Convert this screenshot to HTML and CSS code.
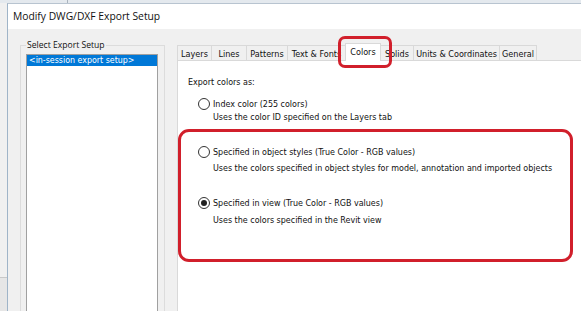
FILE: index.html
```html
<!DOCTYPE html>
<html>
<head>
<meta charset="utf-8">
<link rel="stylesheet" href="styles.css">
</head>
<body>
<div class="desk-top"><span class="desk-mark"></span></div>
<div class="screen">
  <div class="desk-left"><div class="desk-left-low"></div></div>
  <div class="dialog">
    <div class="titlebar">Modify DWG/DXF Export Setup</div>
    <div class="dlg-body">
      <fieldset class="group">
        <legend class="group-label">Select Export Setup</legend>
        <div class="listbox">
          <div class="list-item sel">&lt;in-session export setup&gt;</div>
        </div>
      </fieldset>
      <div class="tabctl">
        <div class="tabs">
          <div class="tab t-layers">Layers</div>
          <div class="tab t-lines">Lines</div>
          <div class="tab t-patterns">Patterns</div>
          <div class="tab t-text">Text &amp; Fonts</div>
          <div class="tab t-colors active">Colors</div>
          <div class="tab t-solids">Solids</div>
          <div class="tab t-units">Units &amp; Coordinates</div>
          <div class="tab t-general">General</div>
        </div>
        <div class="panel">
          <div class="heading">Export colors as:</div>
          <div class="opt opt1">
            <div class="radio-row"><span class="radio"></span><span class="label">Index color (255 colors)</span></div>
            <div class="desc">Uses the color ID specified on the Layers tab</div>
          </div>
          <div class="opt opt2">
            <div class="radio-row"><span class="radio"></span><span class="label">Specified in object styles (True Color - RGB values)</span></div>
            <div class="desc">Uses the colors specified in object styles for model, annotation and imported objects</div>
          </div>
          <div class="opt opt3">
            <div class="radio-row"><span class="radio checked"></span><span class="label">Specified in view (True Color - RGB values)</span></div>
            <div class="desc">Uses the colors specified in the Revit view</div>
          </div>
        </div>
      </div>
    </div>
  </div>
</div>
<div class="mark mark-tab"></div>
<div class="mark mark-opts"></div>
</body>
</html>
```

FILE: styles.css
```css
html, body {
  margin: 0;
  padding: 0;
  width: 581px;
  height: 311px;
  overflow: hidden;
  background: #f0f0f0;
  font-family: "DejaVu Sans Condensed", "DejaVu Sans", sans-serif;
  color: #000;
}

.desk-top {
  height: 3px;
  background: #e4e9ee;
  position: relative;
}
.desk-mark {
  position: absolute;
  left: 67px;
  top: 0;
  width: 1px;
  height: 3px;
  background: #a9b3bd;
}

.screen {
  display: flex;
  height: 308px;
  overflow: hidden;
}

.desk-left {
  width: 7px;
  background: #f0f0f0;
  display: flex;
  flex-direction: column;
  justify-content: flex-end;
}
.desk-left-low {
  height: 33px;
  border-top: 1px solid #c8c8c8;
  background: #e6e6e6;
}

.dialog {
  flex: 1;
  border-left: 1px solid #9fb4c8;
  border-top: 1px solid #b8c4d0;
  display: flex;
  flex-direction: column;
  min-width: 0;
  overflow: hidden;
}

.titlebar {
  height: 25px;
  flex: none;
  background: #fff;
  font-family: "Open Sans", "Noto Sans", sans-serif;
  font-size: 10.3px;
  line-height: 25px;
  padding-left: 5px;
  color: #111;
  white-space: nowrap;
}

.dlg-body {
  flex: 1;
  display: flex;
  align-items: flex-start;
  padding-left: 12px;
  min-height: 0;
}

.group {
  margin: 10px 0 0 0;
  padding: 0 6px 0 5px;
  width: 145px;
  box-sizing: border-box;
  border: 1px solid #dcdcdc;
  height: 300px;
}
.group-label {
  font-family: "Open Sans", "Noto Sans", sans-serif;
  font-size: 8.6px;
  padding: 0 1px;
  margin-left: 0;
  line-height: 12px;
  color: #111;
}
.listbox {
  margin-top: 3px;
  background: #fff;
  border: 1px solid #a0a0a0;
  height: 260px;
}
.list-item {
  font-size: 8.8px;
  line-height: 11px;
  padding-left: 2px;
  white-space: nowrap;
}
.list-item.sel {
  background: #0078d7;
  color: #fff;
}

.tabctl {
  margin-left: 12px;
  margin-top: 15px;
  flex: 1;
  display: flex;
  flex-direction: column;
  min-width: 0;
}
.tabs {
  display: flex;
  height: 16px;
  align-items: flex-end;
}
.tab {
  height: 15px;
  box-sizing: border-box;
  border: 1px solid #d9d9d9;
  border-bottom: none;
  border-left: none;
  background: #f0f0f0;
  font-size: 9px;
  line-height: 16px;
  text-align: center;
  white-space: nowrap;
  color: #111;
}
.t-layers { width: 35px; border-left: 1px solid #d9d9d9; }
.t-lines { width: 35px; }
.t-patterns { width: 41px; }
.t-text { width: 58px; }
.t-colors { width: 36px; }
.t-solids { width: 33px; }
.t-units { width: 86px; }
.t-general { width: 37px; }
.tab.active {
  height: 18px;
  background: #fff;
  margin-bottom: -1px;
  line-height: 17px;
  position: relative;
  border-left: 1px solid #d9d9d9;
  margin-left: -1px;
}

.panel {
  background: #fff;
  border-top: 1px solid #d9d9d9;
  border-left: 1px solid #d9d9d9;
  height: 260px;
  padding: 15px 0 0 10px;
  font-size: 8.9px;
  color: #111;
}
.heading {
  line-height: 12px;
}
.opt {
  white-space: nowrap;
}
.radio-row {
  display: flex;
  align-items: center;
  height: 14px;
}
.radio {
  width: 12px;
  height: 12px;
  box-sizing: border-box;
  border: 1px solid #333;
  border-radius: 50%;
  background: #fff;
  margin-left: 10px;
  margin-right: 3px;
  position: relative;
}
.radio.checked::after {
  content: "";
  position: absolute;
  left: 2px;
  top: 2px;
  width: 6px;
  height: 6px;
  border-radius: 50%;
  background: #222;
}
.desc {
  padding-left: 25px;
  line-height: 12px;
}
.opt1 { margin-top: 9px; }
.opt1 .desc { margin-top: 0; }
.opt2 { margin-top: 22px; }
.opt2 .desc { margin-top: 3px; }
.opt3 { margin-top: 22px; }
.opt3 .desc { margin-top: 4px; }

.mark {
  position: absolute;
  border: 3px solid #d11f2b;
  box-sizing: border-box;
}
.mark-tab {
  left: 338px;
  top: 36px;
  width: 54px;
  height: 32px;
  border-radius: 7px;
}
.mark-opts {
  left: 178px;
  top: 129px;
  width: 395px;
  height: 133px;
  border-radius: 11px;
}
```
